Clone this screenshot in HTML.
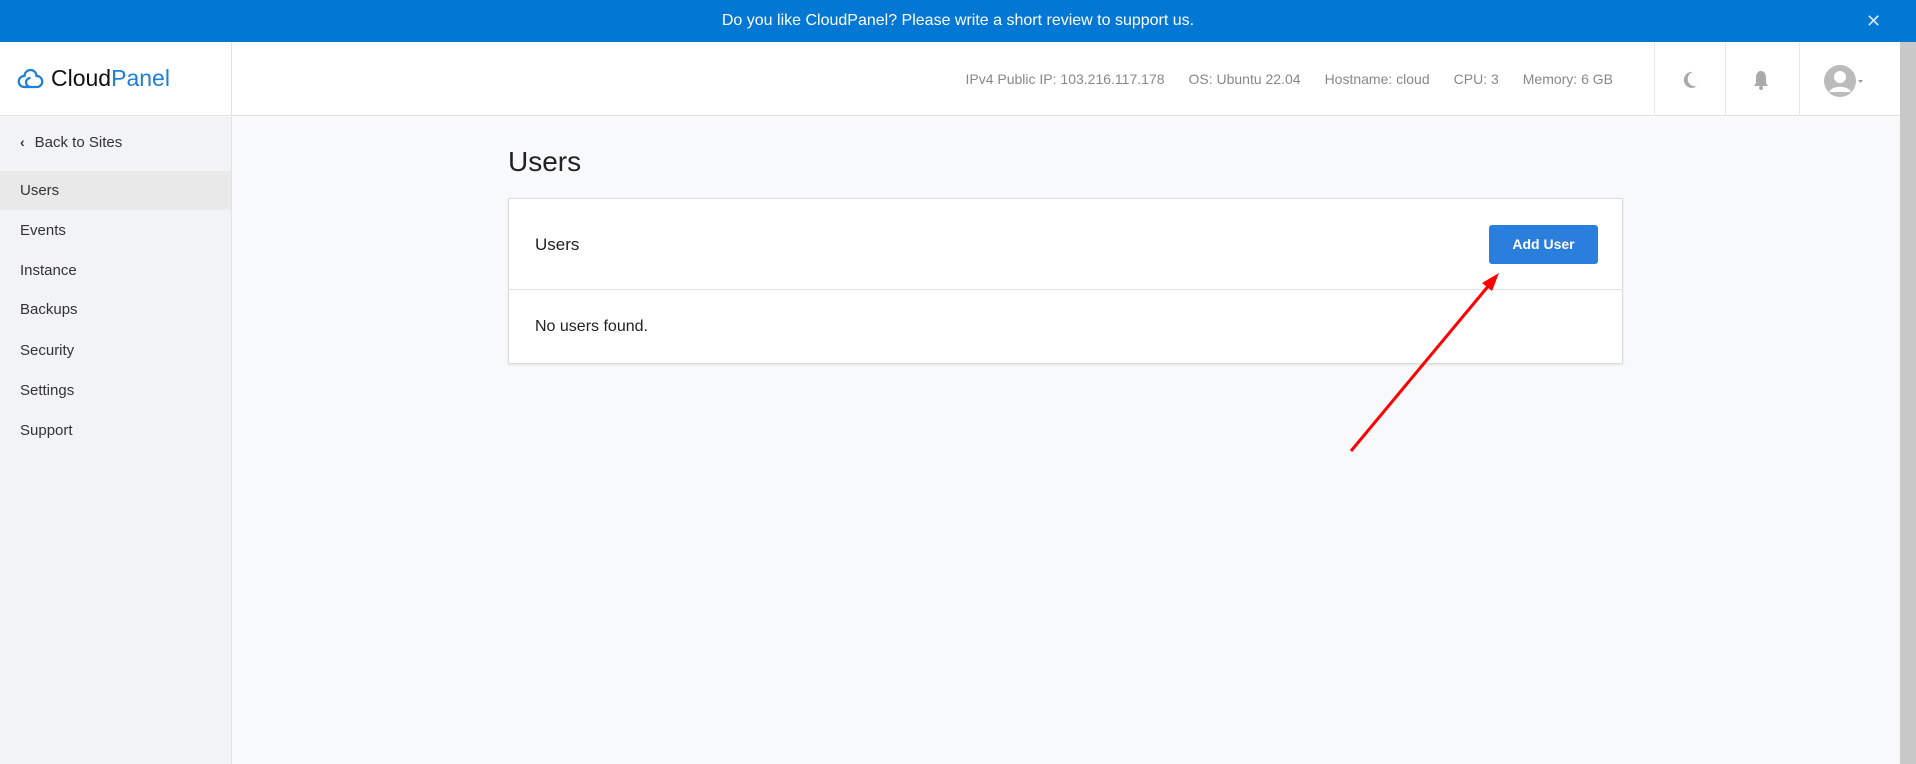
<!DOCTYPE html>
<html><head><meta charset="utf-8"><style>
*{margin:0;padding:0;box-sizing:border-box}
body{width:1916px;height:764px;overflow:hidden;background:#f8f9fa;font-family:"Liberation Sans",sans-serif;position:relative}
.banner{position:absolute;left:0;top:0;width:1916px;height:42px;background:#0277d4;color:#fff;font-size:16px;text-align:center;line-height:42px}
.banner .x{position:absolute;left:1866px;top:0;font-size:18px;color:#cfe3f5}
.header{position:absolute;left:0;top:42px;width:1900px;height:74px;background:#fff;border-bottom:1px solid #e2e2e2}
.logo{position:absolute;left:0;top:0;width:232px;height:74px;border-right:1px solid #e2e2e2}
.logo span{position:absolute;left:51px;top:23px;font-size:23px;color:#111}
.logo b{font-weight:normal;color:#1e7fd8}
.info{position:absolute;right:287px;top:29px;font-size:14px;color:#888}
.info span{margin-left:24px}
.sep{position:absolute;top:0;width:1px;height:74px;background:#e8e8e8}
.side{position:absolute;left:0;top:117px;width:232px;height:647px;background:#f2f3f5;border-right:1px solid #e2e2e2}
.side div{position:absolute;left:20px;font-size:15px;color:#333}
.side .act{left:0;width:231px;height:39px;background:#e9e9e9;top:54px}
h1{position:absolute;left:508px;top:146px;font-size:28px;font-weight:normal;color:#222}
.card{position:absolute;left:508px;top:198px;width:1115px;height:166px;background:#fff;border:1px solid #ddd;box-shadow:0 1px 2px rgba(0,0,0,.1)}
.card .t{position:absolute;left:26px;top:36px;font-size:17px;color:#222}
.card .hr{position:absolute;left:0;top:90px;width:100%;height:1px;background:#e2e2e2}
.card .n{position:absolute;left:26px;top:119px;font-size:16px;color:#222}
.btn{position:absolute;left:980px;top:26px;width:109px;height:39px;background:#2a7fdc;border-radius:3px;color:#fff;font-size:14px;font-weight:bold;text-align:center;line-height:39px}
.scroll{position:absolute;left:1900px;top:42px;width:16px;height:722px;background:#c8c8c8}
</style></head><body>
<div class="banner">Do you like CloudPanel? Please write a short review to support us.<span class="x">✕</span></div>
<div class="header">
 <div class="logo">
  <svg style="position:absolute;left:17px;top:24px" width="27" height="24" viewBox="0 0 27 24" fill="none" stroke="#1e7fd8" stroke-width="2.2"><path d="M7 21A5.5 5.5 0 0 1 7.5 10A6 6 0 0 1 19.5 10A5.5 5.5 0 0 1 20 21Z"/><path d="M13.5 21A4.5 4.5 0 0 1 13.5 12"/></svg>
  <span>Cloud<b>Panel</b></span>
 </div>
 <div class="info">IPv4 Public IP: 103.216.117.178<span>OS: Ubuntu 22.04</span><span>Hostname: cloud</span><span>CPU: 3</span><span>Memory: 6 GB</span></div>
 <div class="sep" style="left:1654px"></div><div class="sep" style="left:1725px"></div><div class="sep" style="left:1799px"></div>
 <svg style="position:absolute;left:1683px;top:29px" width="16" height="18" viewBox="0 0 16 18"><path d="M10 1A8 8 0 1 0 14 15A7 7 0 0 1 10 1Z" fill="#aaa"/></svg>
 <svg style="position:absolute;left:1752px;top:27px" width="18" height="22" viewBox="0 0 18 22"><path d="M9 2C5 2 4 6 4 9V14L2 17H16L14 14V9C14 6 13 2 9 2Z" fill="#aaa"/><circle cx="9" cy="19" r="2" fill="#aaa"/></svg>
 <svg style="position:absolute;left:1823px;top:22px" width="40" height="34" viewBox="0 0 40 34"><circle cx="17" cy="17" r="16" fill="#bbb"/><circle cx="17" cy="13" r="6" fill="#fff"/><path d="M6 28C9 21 25 21 28 28Z" fill="#fff"/><path d="M35 16h5l-2.5 3z" fill="#999"/></svg>
</div>
<div class="side">
 <div class="act"></div>
 <div style="top:17px"><span style="font-size:14px;font-weight:bold;margin-right:10px">&lsaquo;</span>Back to Sites</div>
 <div style="top:65px">Users</div>
 <div style="top:105px">Events</div>
 <div style="top:145px">Instance</div>
 <div style="top:184px">Backups</div>
 <div style="top:225px">Security</div>
 <div style="top:265px">Settings</div>
 <div style="top:305px">Support</div>
</div>
<h1>Users</h1>
<div class="card">
 <div class="t">Users</div>
 <div class="btn">Add User</div>
 <div class="hr"></div>
 <div class="n">No users found.</div>
</div>
<svg style="position:absolute;left:0;top:0" width="1916" height="764"><line x1="1351" y1="451" x2="1490" y2="284" stroke="#f00" stroke-width="3"/><path d="M1499 273L1482 283L1492 291Z" fill="#f00"/></svg>
<div class="scroll"></div>
</body></html>
